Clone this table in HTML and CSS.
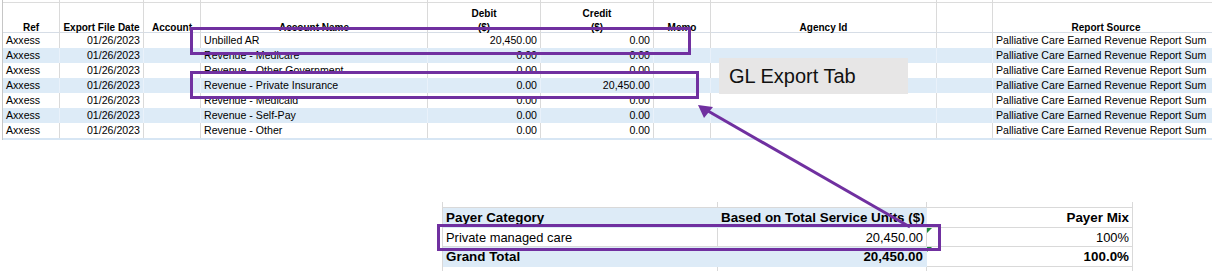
FILE: index.html
```html
<!DOCTYPE html>
<html>
<head>
<meta charset="utf-8">
<title>GL Export Tab</title>
<link rel="stylesheet" href="styles.css">
</head>
<body>
<div class="page">
  <div class="gl">
    <div class="row head">
      <div class="cell">Ref</div>
      <div class="cell">Export File Date</div>
      <div class="cell">Account</div>
      <div class="cell">Account Name</div>
      <div class="cell">Debit<br>($)</div>
      <div class="cell">Credit<br>($)</div>
      <div class="cell">Memo</div>
      <div class="cell">Agency Id</div>
      <div class="cell"></div>
      <div class="cell">Report Source</div>
    </div>
    <div class="row">
      <div class="cell">Axxess</div><div class="cell num">01/26/2023</div><div class="cell"></div><div class="cell">Unbilled AR</div><div class="cell num">20,450.00</div><div class="cell num">0.00</div><div class="cell"></div><div class="cell"></div><div class="cell"></div><div class="cell">Palliative Care Earned Revenue Report Sum</div>
    </div>
    <div class="row band">
      <div class="cell">Axxess</div><div class="cell num">01/26/2023</div><div class="cell"></div><div class="cell">Revenue - Medicare</div><div class="cell num">0.00</div><div class="cell num">0.00</div><div class="cell"></div><div class="cell"></div><div class="cell"></div><div class="cell">Palliative Care Earned Revenue Report Sum</div>
    </div>
    <div class="row">
      <div class="cell">Axxess</div><div class="cell num">01/26/2023</div><div class="cell"></div><div class="cell">Revenue - Other Government</div><div class="cell num">0.00</div><div class="cell num">0.00</div><div class="cell"></div><div class="cell"></div><div class="cell"></div><div class="cell">Palliative Care Earned Revenue Report Sum</div>
    </div>
    <div class="row band">
      <div class="cell">Axxess</div><div class="cell num">01/26/2023</div><div class="cell"></div><div class="cell">Revenue - Private Insurance</div><div class="cell num">0.00</div><div class="cell num">20,450.00</div><div class="cell"></div><div class="cell"></div><div class="cell"></div><div class="cell">Palliative Care Earned Revenue Report Sum</div>
    </div>
    <div class="row">
      <div class="cell">Axxess</div><div class="cell num">01/26/2023</div><div class="cell"></div><div class="cell">Revenue - Medicaid</div><div class="cell num">0.00</div><div class="cell num">0.00</div><div class="cell"></div><div class="cell"></div><div class="cell"></div><div class="cell">Palliative Care Earned Revenue Report Sum</div>
    </div>
    <div class="row band">
      <div class="cell">Axxess</div><div class="cell num">01/26/2023</div><div class="cell"></div><div class="cell">Revenue - Self-Pay</div><div class="cell num">0.00</div><div class="cell num">0.00</div><div class="cell"></div><div class="cell"></div><div class="cell"></div><div class="cell">Palliative Care Earned Revenue Report Sum</div>
    </div>
    <div class="row">
      <div class="cell">Axxess</div><div class="cell num">01/26/2023</div><div class="cell"></div><div class="cell">Revenue - Other</div><div class="cell num">0.00</div><div class="cell num">0.00</div><div class="cell"></div><div class="cell"></div><div class="cell"></div><div class="cell">Palliative Care Earned Revenue Report Sum</div>
    </div>
    <div class="gl-end"></div>
  </div>

  <div class="mix">
    <div class="mrow spacer"><div class="mcell"></div><div class="mcell"></div><div class="mcell"></div></div>
    <div class="mrow mhead">
      <div class="mcell fill">Payer Category</div>
      <div class="mcell fill num">Based on Total Service Units ($)</div>
      <div class="mcell num">Payer Mix</div>
    </div>
    <div class="mrow mbody">
      <div class="mcell">Private managed care</div>
      <div class="mcell num">20,450.00</div>
      <div class="mcell num flag">100%</div>
    </div>
    <div class="mrow mtotal">
      <div class="mcell fill">Grand Total</div>
      <div class="mcell fill num">20,450.00</div>
      <div class="mcell num flag">100.0%</div>
    </div>
    <div class="mrow spacer"><div class="mcell"></div><div class="mcell"></div><div class="mcell"></div></div>
  </div>

  <div class="callout">GL Export Tab</div>
  <div class="box box1"></div>
  <div class="box box2"></div>
  <div class="box box3"></div>
  <svg class="arrow" width="1212" height="271" viewBox="0 0 1212 271">
    <line x1="708" y1="111" x2="910" y2="227" stroke="#7030a0" stroke-width="3"/>
    <polygon points="698,105 713,107 704,118" fill="#7030a0"/>
  </svg>
</div>
</body>
</html>
```

FILE: styles.css
```css
html, body {
  margin: 0;
  padding: 0;
}
body {
  width: 1212px;
  height: 271px;
  overflow: hidden;
  background: #ffffff;
  font-family: "Liberation Sans", Arial, sans-serif;
  color: #000000;
}
.page {
  position: relative;
  width: 1212px;
  height: 271px;
  overflow: hidden;
}

/* ---------- GL export table ---------- */
.gl {
  margin-left: 2px;
  width: 1218px;
  border-left: 1px solid #c6c6c6;
}
.row {
  display: grid;
  grid-template-columns: 57px 84px 57px 227px 113px 113px 57px 226px 56px 227px;
  height: 15px;
}
.cell {
  box-sizing: border-box;
  border-right: 1px solid #dadada;
  padding: 0 3px;
  font-size: 10.6px;
  line-height: 15px;
  white-space: nowrap;
  overflow: hidden;
}
.num {
  text-align: right;
}
.band {
  background: #ddebf7;
}
.band .cell {
  border-right-color: #e9f1fa;
}
.row.head {
  height: 33px;
  background: linear-gradient(#dcdcdc, #dcdcdc) 0 2px / 100% 1px no-repeat;
  border-bottom: 1px solid #d6dde6;
  box-sizing: border-box;
}
.head .cell {
  height: 35px;
  display: flex;
  align-items: flex-end;
  justify-content: center;
  text-align: center;
  font-weight: bold;
  font-size: 10px;
  line-height: 14px;
  padding-bottom: 0;
  overflow: visible;
}
.gl-end {
  height: 2px;
  background: #d7e6f4;
}

/* ---------- payer mix table ---------- */
.mix {
  margin-top: 62px;
  margin-left: 442px;
  width: 691px;
  border-left: 1px solid #d9d9d9;
}
.mrow {
  display: grid;
  grid-template-columns: 275px 209px 206px;
}
.mcell {
  position: relative;
  box-sizing: border-box;
  border-right: 1px solid #d9d9d9;
  border-bottom: 1px solid #d9d9d9;
  padding: 0 3px;
  font-size: 12.9px;
  white-space: nowrap;
  overflow: hidden;
}
.mcell.fill {
  background: #ddebf7;
  border-right-color: #ddebf7;
  border-bottom-color: #ddebf7;
}
.spacer {
  height: 6px;
}
.spacer:last-child {
  height: 5px;
}
.spacer:last-child .mcell {
  border-bottom: none;
}
.mhead .mcell {
  height: 20px;
  line-height: 20px;
  font-weight: bold;
  font-size: 13.4px;
}
.mbody .mcell {
  height: 19px;
  line-height: 19px;
}
.mtotal .mcell {
  height: 20px;
  line-height: 20px;
  font-weight: bold;
  font-size: 13.4px;
}
.flag::before {
  content: "";
  position: absolute;
  left: 0;
  top: 0;
  border-top: 5px solid #1e8a3c;
  border-right: 5px solid transparent;
}

/* ---------- annotations ---------- */
.callout {
  position: absolute;
  left: 719px;
  top: 58px;
  width: 189px;
  height: 36px;
  box-sizing: border-box;
  padding: 2px 0 0 10px;
  background: #e7e6e6;
  font-size: 20px;
  line-height: 33px;
  color: #111111;
}
.box {
  position: absolute;
  box-sizing: border-box;
  border: 3px solid #7030a0;
}
.box1 {
  left: 190px;
  top: 27px;
  width: 501px;
  height: 28px;
}
.box2 {
  left: 190px;
  top: 71px;
  width: 509px;
  height: 28px;
}
.box3 {
  left: 437px;
  top: 224px;
  width: 504px;
  height: 27px;
}
.arrow {
  position: absolute;
  left: 0;
  top: 0;
  pointer-events: none;
}
```
